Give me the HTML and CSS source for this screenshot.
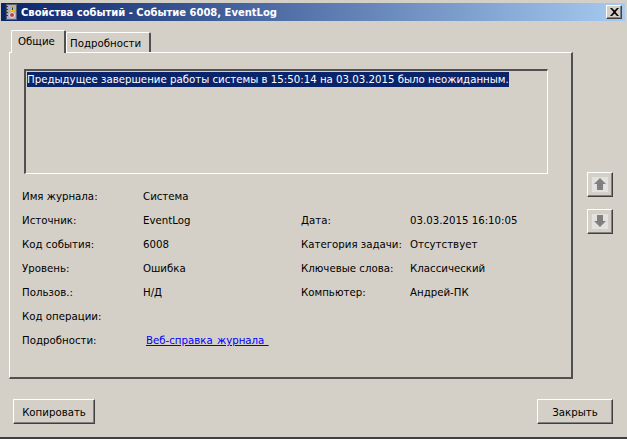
FILE: index.html
```html
<!DOCTYPE html>
<html lang="ru">
<head>
<meta charset="utf-8">
<title>Свойства событий</title>
<link rel="stylesheet" href="styles.css">
</head>
<body>
<div class="window">
  <header class="titlebar">
    <svg class="app-icon" width="14" height="16" viewBox="0 0 14 16">
      <rect x="2.500" y="0.500" width="10" height="15" fill="#a4aec4" stroke="#5a6070"/>
      <rect x="1" y="2" width="3" height="1" fill="#333"/><rect x="1" y="5" width="3" height="1" fill="#333"/><rect x="1" y="8" width="3" height="1" fill="#333"/><rect x="1" y="11" width="3" height="1" fill="#333"/>
      <path d="M8.500 2l3 5h-6z" fill="#f2c21a"/>
      <rect x="8" y="3.500" width="1" height="2.500" fill="#333"/>
      <circle cx="8" cy="11" r="2.500" fill="#c83c3c" stroke="#f3e6e0"/>
    </svg>
    <span class="title">Свойства событий - Событие 6008, EventLog</span>
    <button class="close" aria-label="Закрыть">
      <svg width="9" height="8" viewBox="0 0 9 8"><path d="M0 0h2l2.500 2.600L7 0h2L5.500 4 9 8H7L4.500 5.400 2 8H0l3.500-4z" fill="#000"/></svg>
    </button>
  </header>
  <div class="content">
    <div class="tabs-row">
      <div class="tab active">Общие</div>
      <div class="tab">Подробности</div>
    </div>
    <div class="main-row">
      <section class="panel">
        <div class="message"><span class="selected">Предыдущее завершение работы системы в 15:50:14 на 03.03.2015 было неожиданным.</span></div>
        <dl class="fields">
          <dt>Имя журнала:</dt><dd>Система</dd><dt></dt><dd></dd>
          <dt>Источник:</dt><dd>EventLog</dd><dt>Дата:</dt><dd>03.03.2015 16:10:05</dd>
          <dt>Код события:</dt><dd>6008</dd><dt>Категория задачи:</dt><dd>Отсутствует</dd>
          <dt>Уровень:</dt><dd>Ошибка</dd><dt>Ключевые слова:</dt><dd>Классический</dd>
          <dt>Пользов.:</dt><dd>Н/Д</dd><dt>Компьютер:</dt><dd>Андрей-ПК</dd>
          <dt>Код операции:</dt><dd></dd><dt></dt><dd></dd>
          <dt>Подробности:</dt><dd><a class="link" href="#">Веб-справка журнала&nbsp;</a></dd><dt></dt><dd></dd>
        </dl>
      </section>
      <div class="arrows">
        <button class="arrow" aria-label="Вверх"><span class="arrow-face"><svg width="14" height="13" viewBox="0 0 14 13"><path d="M7 0l6 6h-3v6H4V6H1z" fill="#808080"/></svg></span></button>
        <button class="arrow" aria-label="Вниз"><span class="arrow-face"><svg width="14" height="13" viewBox="0 0 14 13"><path d="M4 0h6v6h3l-6 6-6-6h3z" fill="#808080"/></svg></span></button>
      </div>
    </div>
    <div class="actions">
      <button class="btn">Копировать</button>
      <button class="btn">Закрыть</button>
    </div>
  </div>
</div>
</body>
</html>
```
FILE: styles.css
```css
* { box-sizing: border-box; }
html, body { margin: 0; padding: 0; }
body {
  width: 627px;
  height: 439px;
  overflow: hidden;
  background: #d4d0c8;
  font-family: "DejaVu Sans Condensed", "DejaVu Sans", sans-serif;
  font-size: 11.35px;
  color: #000;
}
.window {
  height: 439px;
  display: flex;
  flex-direction: column;
  padding: 3px 2px 2px 1px;
  border-bottom: 2px solid #404040;
}
.titlebar {
  height: 18px;
  flex: none;
  display: flex;
  align-items: center;
  padding: 0 3px 0 3px;
  gap: 3px;
  background: linear-gradient(90deg, #0a246a, #a6caf0);
  color: #fff;
  font-weight: bold;
  font-size: 11.1px;
}
.app-icon { flex: none; }
.title { flex: 1; white-space: nowrap; }
.close, .arrow, .btn {
  background: #d4d0c8;
  border: 1px solid;
  border-color: #fff #404040 #404040 #fff;
  box-shadow: inset -1px -1px 0 #808080;
  padding: 0;
  font: inherit;
  color: #000;
}
.close {
  width: 16px;
  height: 14px;
  display: flex;
  align-items: center;
  justify-content: center;
}
.content {
  flex: 1;
  display: flex;
  flex-direction: column;
  padding: 9px 0 0 8px;
}
.tabs-row {
  display: flex;
  align-items: flex-end;
  height: 23px;
  padding-left: 2px;
  position: relative;
  z-index: 1;
  margin-bottom: -1px;
}
.tab {
  height: 20px;
  padding: 3px 0 0 3px;
  border: 1px solid #fff;
  border-bottom: 0;
  border-right: 2px solid #505050;
  border-radius: 2px 2px 0 0;
  width: 85px;
  margin-bottom: 1px;
}
.tab.active {
  width: 55px;
  height: 23px;
  padding: 3px 0 0 6px;
  margin-bottom: 0;
  background: #d4d0c8;
}
.main-row {
  display: flex;
  height: 327px;
}
.panel {
  width: 564px;
  flex: none;
  border: 1px solid #fff;
  border-right: 2px solid #505050;
  border-bottom: 2px solid #505050;
  padding: 16px 0 0 14px;
}
.message {
  width: 524px;
  height: 105px;
  border-style: solid;
  border-color: #505050 #fff #fff #505050;
  border-width: 2px 1px 1px 2px;
  padding: 1px;
  line-height: 15px;
  white-space: nowrap;
}
.selected { display: inline-block; background: #0a246a; color: #fff; }
.fields {
  margin: 10px 0 0 -2px;
  display: grid;
  grid-template-columns: 121px 158px 109px 1fr;
  grid-auto-rows: 24px;
  align-items: center;
}
dt, dd { margin: 0; white-space: nowrap; }
.link { color: #0000ff; margin-left: 3px; word-spacing: 1px; }
.arrows {
  display: flex;
  flex-direction: column;
  gap: 12px;
  padding: 120px 0 0 14px;
}
.arrow {
  width: 26px;
  height: 25px;
  padding: 4px;
  display: block;
}
.arrow-face {
  display: flex;
  align-items: center;
  justify-content: center;
  width: 16px;
  height: 15px;
  background: #e4e2de;
}
.actions {
  display: flex;
  justify-content: space-between;
  padding: 20px 12px 0 4px;
}
.btn { width: 82px; height: 25px; }
.btn:last-child { width: 76px; }
```
